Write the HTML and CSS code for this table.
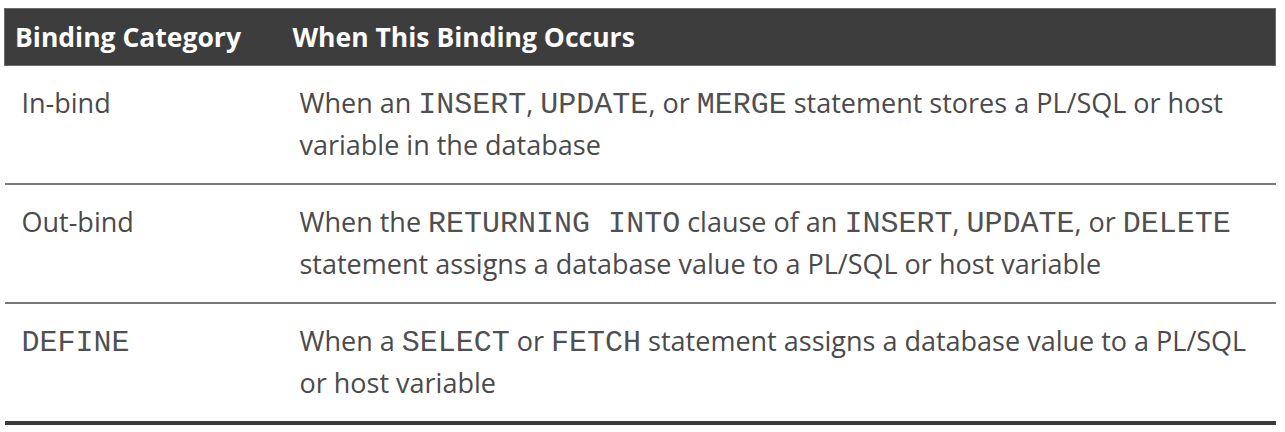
FILE: index.html
```html
<!DOCTYPE html>
<html>
<head>
<meta charset="utf-8">
<link rel="stylesheet" href="styles.css">
</head>
<body>
<table class="bind-table">
  <thead>
    <tr>
      <th class="col-cat">Binding Category</th>
      <th>When This Binding Occurs</th>
    </tr>
  </thead>
  <tbody>
    <tr>
      <td class="col-cat">In-bind</td>
      <td>When an <code>INSERT</code>, <code>UPDATE</code>, or <code>MERGE</code> statement stores a PL/SQL or host variable in the database</td>
    </tr>
    <tr>
      <td class="col-cat">Out-bind</td>
      <td>When the <code>RETURNING INTO</code> clause of an <code>INSERT</code>, <code>UPDATE</code>, or <code>DELETE</code> statement assigns a database value to a PL/SQL or host variable</td>
    </tr>
    <tr class="last">
      <td class="col-cat"><code>DEFINE</code></td>
      <td>When a <code>SELECT</code> or <code>FETCH</code> statement assigns a database value to a PL/SQL or host variable</td>
    </tr>
  </tbody>
</table>
</body>
</html>
```
FILE: styles.css
```css
html, body {
  margin: 0;
  padding: 0;
  background: #ffffff;
}
body {
  padding: 8px 9px 0 4px;
  font-family: "Open Sans", "Noto Sans", "Liberation Sans", sans-serif;
}
.bind-table {
  width: 1272px;
  border-collapse: collapse;
  table-layout: fixed;
}
.bind-table th {
  background: #3d3d3d;
  color: #ffffff;
  font-weight: 700;
  font-size: 26.5px;
  text-align: left;
  height: 57px;
  padding: 0 10px;
  box-sizing: border-box;
  vertical-align: middle;
  border: 1px solid #6a6a6a;
  border-left: none;
  border-right: none;
  white-space: nowrap;
}
.bind-table th:first-child { border-left: 1px solid #6a6a6a; }
.bind-table th:last-child { border-right: 1px solid #6a6a6a; }
.bind-table .col-cat { width: 278px; }
.bind-table td {
  color: #4a4a4a;
  font-size: 27px;
  line-height: 42px;
  padding: 16px 24px 17px 17px;
  vertical-align: top;
  border-bottom: 2px solid #7a7a7a;
}
.bind-table tr.last td {
  border-bottom: 4px solid #3a3a3a;
}
.bind-table code {
  font-family: "Liberation Mono", "Courier New", monospace;
  font-size: 30px;
  line-height: 1;
  color: #505050;
}
```
